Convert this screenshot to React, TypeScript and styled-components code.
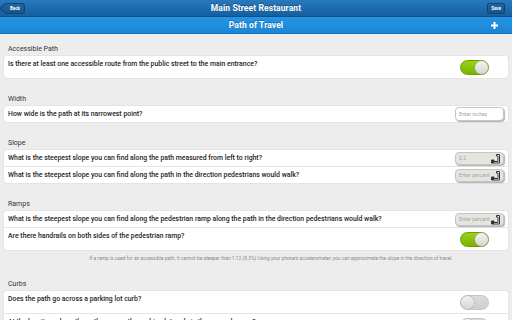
import React from "react";
import styled, { createGlobalStyle } from "styled-components";

const GlobalStyle = createGlobalStyle`
  html, body {
    margin: 0;
    padding: 0;
    background: #ededed;
    overflow: hidden;
  }
  body {
    font-family: Roboto, "Liberation Sans", Arial, sans-serif;
    color: #222;
  }
`;

const Page = styled.div`
  width: 512px;
  height: 320px;
  overflow: hidden;
  background: #ededed;
`;

const TopBar = styled.div`
  position: relative;
  height: 17px;
  display: flex;
  align-items: center;
  justify-content: center;
  background: linear-gradient(#2879bd, #145f9f);
  border-bottom: 1px solid #104f86;
  box-sizing: border-box;
`;

const BarTitle = styled.div`
  color: #fff;
  font-weight: 700;
  font-size: 8.5px;
  letter-spacing: 0.1px;
  text-shadow: 0 -1px 0 rgba(0, 0, 0, 0.3);
`;

const BackButton = styled.div`
  position: absolute;
  left: 5px;
  top: 3px;
  height: 11px;
  padding: 0 4px 0 5px;
  display: flex;
  align-items: center;
  background: linear-gradient(#1e65a3, #17568d);
  border: 1px solid #0f4577;
  border-left: none;
  border-radius: 0 3px 3px 0;
  color: #fff;
  font-size: 4.5px;
  font-weight: 700;
  box-sizing: border-box;

  &::before {
    content: "";
    position: absolute;
    left: -4px;
    top: 1px;
    width: 7px;
    height: 7px;
    background: linear-gradient(135deg, #1e65a3, #17568d);
    border-left: 1px solid #0f4577;
    border-bottom: 1px solid #0f4577;
    transform: rotate(45deg);
    box-sizing: border-box;
  }

  span {
    position: relative;
  }
`;

const SaveButton = styled.div`
  position: absolute;
  right: 7px;
  top: 3px;
  height: 11px;
  padding: 0 3px;
  display: flex;
  align-items: center;
  background: linear-gradient(#1e65a3, #17568d);
  border: 1px solid #0f4577;
  border-radius: 2px;
  color: #fff;
  font-size: 4.5px;
  font-weight: 700;
  box-sizing: border-box;
`;

const SubBar = styled.div`
  position: relative;
  height: 17px;
  display: flex;
  align-items: center;
  justify-content: center;
  background: linear-gradient(#2595e6, #1c85d4);
  border-bottom: 1px solid #176fb2;
  box-sizing: border-box;
`;

const PlusIcon = styled.svg`
  position: absolute;
  right: 14px;
  top: 5px;
`;

const Content = styled.div`
  padding: 0 4px;
`;

const Section = styled.div<{ $gap: number }>`
  margin-top: ${(p) => p.$gap}px;
`;

const SectionLabel = styled.div`
  height: 14px;
  line-height: 15px;
  padding-left: 4px;
  font-size: 7px;
  color: #333;
`;

const Card = styled.div`
  background: #fff;
  border-radius: 3px;
  box-shadow: 0 0 0 1px #e4e4e4;
`;

const Row = styled.div<{ $tall?: boolean }>`
  display: flex;
  align-items: ${(p) => (p.$tall ? "flex-start" : "center")};
  justify-content: space-between;
  min-height: ${(p) => (p.$tall ? 22 : 16)}px;
  padding: 0 4px;
  & + & {
    border-top: 1px solid #e6e6e6;
  }
`;

const Question = styled.div<{ $tall?: boolean }>`
  font-size: 6.9px;
  font-weight: 500;
  line-height: 10px;
  padding-top: ${(p) => (p.$tall ? 3 : 0)}px;
  color: #1e1e1e;
`;

const Toggle = styled.div<{ $on?: boolean }>`
  position: relative;
  width: 29px;
  height: 15px;
  margin: 4px 15px 3px 0;
  border-radius: 8px;
  box-sizing: border-box;
  background: ${(p) =>
    p.$on
      ? "linear-gradient(#9ad11a, #79b300)"
      : "linear-gradient(#dadada, #cfcfcf)"};
  border: 1px solid ${(p) => (p.$on ? "#6c9e00" : "#c4c4c4")};

  &::after {
    content: "";
    position: absolute;
    top: 0;
    ${(p) => (p.$on ? "right: 0;" : "left: 0;")}
    width: 13px;
    height: 13px;
    border-radius: 50%;
    background: linear-gradient(#f2f2f2, #d6d6d6);
    box-shadow: 0 0 0 0.5px #a8a8a8;
  }
`;

const InputBox = styled.div<{ $filled?: boolean }>`
  width: 49px;
  height: ${(p) => (p.$filled ? 13 : 14)}px;
  margin: 1px 0;
  display: flex;
  align-items: center;
  justify-content: space-between;
  padding: 0 2px 0 3px;
  box-sizing: border-box;
  border: 1px solid #c4c4c4;
  border-radius: 4px;
  background: ${(p) => (p.$filled ? "#e5e5df" : "#fff")};
  box-shadow: 1px 1px 1px rgba(0, 0, 0, 0.3);
  font-size: 5.2px;
  color: #a5a5a5;
  overflow: hidden;
  white-space: nowrap;

  span {
    overflow: hidden;
  }
`;

const LevelIcon = () => (
  <svg width="11" height="11" viewBox="0 0 11 11" style={{ flex: "none" }}>
    <path
      d="M6.5 1.5 H9.5 V10 H1.5 V7 H4 V8.5 H8 V3 H6.5 Z"
      fill="#fff"
      stroke="#333"
      strokeWidth="1"
    />
    <rect x="1.5" y="7" width="2.5" height="3" fill="#333" />
  </svg>
);

const Note = styled.div`
  padding: 4px 0 0 30px;
  line-height: 8px;
  text-align: center;
  font-size: 4.9px;
  color: #8a8a8a;
`;

type Item =
  | { q: string; kind: "toggle"; on?: boolean }
  | { q: string; kind: "input"; placeholder: string; value?: string; level?: boolean };

const sections: { label: string; gap: number; items: Item[]; note?: string }[] = [
  {
    label: "Accessible Path",
    gap: 8,
    items: [
      {
        q: "Is there at least one accessible route from the public street to the main entrance?",
        kind: "toggle",
        on: true,
      },
    ],
  },
  {
    label: "Width",
    gap: 14,
    items: [
      { q: "How wide is the path at its narrowest point?", kind: "input", placeholder: "Enter inches" },
    ],
  },
  {
    label: "Slope",
    gap: 14,
    items: [
      {
        q: "What is the steepest slope you can find along the path measured from left to right?",
        kind: "input",
        placeholder: "",
        value: "0.2",
        level: true,
      },
      {
        q: "What is the steepest slope you can find along the path in the direction pedestrians would walk?",
        kind: "input",
        placeholder: "Enter percent",
        level: true,
      },
    ],
  },
  {
    label: "Ramps",
    gap: 14,
    items: [
      {
        q: "What is the steepest slope you can find along the pedestrian ramp along the path in the direction pedestrians would walk?",
        kind: "input",
        placeholder: "Enter percent",
        level: true,
      },
      { q: "Are there handrails on both sides of the pedestrian ramp?", kind: "toggle", on: true },
    ],
    note:
      "If a ramp is used for an accessible path, it cannot be steeper than 1:12 (8.3%) Using your phone's accelerometer, you can approximate the slope in the direction of travel.",
  },
  {
    label: "Curbs",
    gap: 15,
    items: [
      { q: "Does the path go across a parking lot curb?", kind: "toggle" },
      {
        q: "At the location where the path crosses the parking lot curb, is there a curb ramp?",
        kind: "toggle",
      },
    ],
  },
];

export default function App() {
  return (
    <Page>
      <GlobalStyle />
      <TopBar>
        <BackButton>
          <span>Back</span>
        </BackButton>
        <BarTitle>Main Street Restaurant</BarTitle>
        <SaveButton>Save</SaveButton>
      </TopBar>
      <SubBar>
        <BarTitle>Path of Travel</BarTitle>
        <PlusIcon width="7" height="7" viewBox="0 0 7 7">
          <path d="M2.5 0 H4.5 V2.5 H7 V4.5 H4.5 V7 H2.5 V4.5 H0 V2.5 H2.5 Z" fill="#fff" />
        </PlusIcon>
      </SubBar>
      <Content>
        {sections.map((s) => (
          <Section key={s.label} $gap={s.gap}>
            <SectionLabel>{s.label}</SectionLabel>
            <Card>
              {s.items.map((it) =>
                it.kind === "toggle" ? (
                  <Row key={it.q} $tall>
                    <Question $tall>{it.q}</Question>
                    <Toggle $on={it.on} />
                  </Row>
                ) : (
                  <Row key={it.q}>
                    <Question>{it.q}</Question>
                    <InputBox $filled={it.level}>
                      <span>{it.value ?? it.placeholder}</span>
                      {it.level && <LevelIcon />}
                    </InputBox>
                  </Row>
                )
              )}
            </Card>
            {s.note && <Note>{s.note}</Note>}
          </Section>
        ))}
      </Content>
    </Page>
  );
}
